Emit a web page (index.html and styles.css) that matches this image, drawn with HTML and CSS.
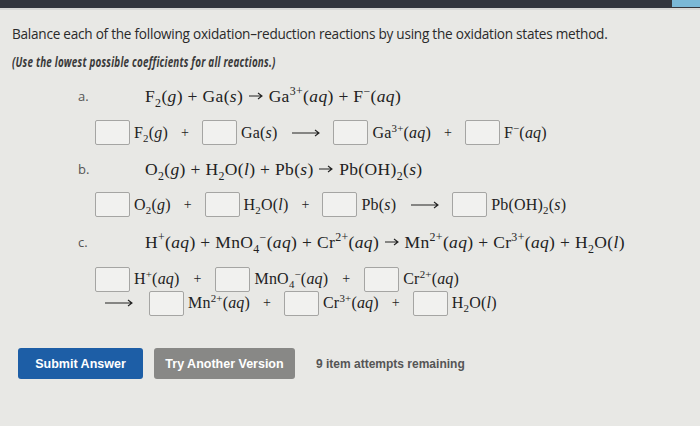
FILE: index.html
```html
<!DOCTYPE html>
<html>
<head>
<meta charset="utf-8">
<link rel="stylesheet" href="styles.css">
</head>
<body>
<div class="topbar"><span class="badge">Kno</span></div>
<div class="content">
  <p class="intro">Balance each of the following oxidation–reduction reactions by using the oxidation states method.</p>
  <p class="note"><span class="note-text">(Use the lowest possible coefficients for all reactions.)</span></p>

  <div class="problem pa">
    <div class="eq-line"><span class="label">a.</span><span class="math">F<sub>2</sub>(<i>g</i>) + Ga(<i>s</i>) <svg class="sarrow" viewBox="0 0 16 10"><path d="M1 5H14M10 2L14 5L10 8" /></svg> Ga<sup>3+</sup>(<i>aq</i>) + F<sup>−</sup>(<i>aq</i>)</span></div>
    <div class="ans-row">
      <span class="box"></span><span class="term">F<sub>2</sub>(<i>g</i>)</span><span class="op">+</span>
      <span class="box"></span><span class="term">Ga(<i>s</i>)</span><svg class="larrow" viewBox="0 0 30 10"><path d="M1 5H28M24 2L28 5L24 8" /></svg>
      <span class="box"></span><span class="term">Ga<sup>3+</sup>(<i>aq</i>)</span><span class="op">+</span>
      <span class="box"></span><span class="term">F<sup>−</sup>(<i>aq</i>)</span>
    </div>
  </div>

  <div class="problem pb">
    <div class="eq-line"><span class="label">b.</span><span class="math">O<sub>2</sub>(<i>g</i>) + H<sub>2</sub>O(<i>l</i>) + Pb(<i>s</i>) <svg class="sarrow" viewBox="0 0 16 10"><path d="M1 5H14M10 2L14 5L10 8" /></svg> Pb(OH)<sub>2</sub>(<i>s</i>)</span></div>
    <div class="ans-row">
      <span class="box"></span><span class="term">O<sub>2</sub>(<i>g</i>)</span><span class="op">+</span>
      <span class="box"></span><span class="term">H<sub>2</sub>O(<i>l</i>)</span><span class="op">+</span>
      <span class="box"></span><span class="term">Pb(<i>s</i>)</span><svg class="larrow" viewBox="0 0 30 10"><path d="M1 5H28M24 2L28 5L24 8" /></svg>
      <span class="box"></span><span class="term">Pb(OH)<sub>2</sub>(<i>s</i>)</span>
    </div>
  </div>

  <div class="problem pc">
    <div class="eq-line"><span class="label">c.</span><span class="math">H<sup>+</sup>(<i>aq</i>) + MnO<sub>4</sub><sup>−</sup>(<i>aq</i>) + Cr<sup>2+</sup>(<i>aq</i>) <svg class="sarrow" viewBox="0 0 16 10"><path d="M1 5H14M10 2L14 5L10 8" /></svg> Mn<sup>2+</sup>(<i>aq</i>) + Cr<sup>3+</sup>(<i>aq</i>) + H<sub>2</sub>O(<i>l</i>)</span></div>
    <div class="ans-row tight">
      <span class="box"></span><span class="term">H<sup>+</sup>(<i>aq</i>)</span><span class="op">+</span>
      <span class="box"></span><span class="term">MnO<sub>4</sub><sup>−</sup>(<i>aq</i>)</span><span class="op">+</span>
      <span class="box"></span><span class="term">Cr<sup>2+</sup>(<i>aq</i>)</span>
    </div>
    <div class="ans-row tight second">
      <svg class="larrow lead" viewBox="0 0 30 10"><path d="M1 5H28M24 2L28 5L24 8" /></svg>
      <span class="box"></span><span class="term">Mn<sup>2+</sup>(<i>aq</i>)</span><span class="op">+</span>
      <span class="box"></span><span class="term">Cr<sup>3+</sup>(<i>aq</i>)</span><span class="op">+</span>
      <span class="box"></span><span class="term">H<sub>2</sub>O(<i>l</i>)</span>
    </div>
  </div>

  <div class="actions">
    <button class="btn primary">Submit Answer</button>
    <button class="btn secondary">Try Another Version</button>
    <span class="attempts">9 item attempts remaining</span>
  </div>
</div>
</body>
</html>
```
FILE: styles.css
```css
html, body {
  margin: 0;
  padding: 0;
}
body {
  width: 700px;
  height: 426px;
  overflow: hidden;
  background: #e8e8e5;
  font-family: "Open Sans", "Liberation Sans", sans-serif;
  color: #2a2a2a;
}
.topbar {
  height: 8px;
  background: #34373e;
  display: flex;
  justify-content: flex-end;
  border-bottom: 2px solid #d9d9d6;
}
.badge {
  width: 28px;
  height: 7px;
  background: #7ab8d6;
  color: #7ab8d6;
  font-size: 6px;
  line-height: 7px;
  overflow: hidden;
}
.content {
  padding-left: 12px;
}
.intro {
  margin: 15px 0 0 0;
  font-size: 13.6px;
  line-height: 18px;
  letter-spacing: -0.25px;
}
.note {
  margin: 10px 0 0 0;
  font-size: 14.5px;
  line-height: 18px;
  font-style: italic;
  font-weight: 700;
  color: #3a3a3a;
  white-space: nowrap;
}
.note-text {
  display: inline-block;
  transform: scaleX(0.68);
  transform-origin: left center;
  letter-spacing: 0.3px;
}
.problem {
  display: flex;
  flex-direction: column;
}
.eq-line {
  display: flex;
  align-items: center;
  height: 22px;
}
.label {
  width: 67px;
  padding-left: 66px;
  font-size: 13px;
  color: #555;
}
.math, .term, .op {
  font-family: "Liberation Serif", "DejaVu Serif", serif;
  color: #222;
}
.math {
  font-size: 17.5px;
  letter-spacing: 0.35px;
  white-space: nowrap;
}
sub, sup {
  font-size: 68%;
  line-height: 0;
}
.sarrow {
  width: 16px;
  height: 10px;
  vertical-align: 1px;
}
.sarrow path, .larrow path {
  fill: none;
  stroke: #222;
  stroke-width: 1.1;
}
.larrow {
  width: 30px;
  height: 10px;
  margin: 0 12px 0 14px;
  flex-shrink: 0;
}
.larrow.lead {
  margin: 0 15px 0 9px;
}
.ans-row {
  display: flex;
  align-items: center;
  height: 25px;
  padding-left: 83px;
  margin-top: 12px;
  white-space: nowrap;
}
.pa { margin-top: 14px; }
.pa .ans-row { margin-top: 13px; }
.pb { margin-top: 13px; }
.pc { margin-top: 14px; }
.pc .tight { margin-top: 14px; height: 24px; }
.pc .tight.second { margin-top: 0; }
.pc .tight:first-child + .tight { margin-top: 0; }
.pc .tight .op { margin: 0 14px; }
.pc .tight.second .op { margin: 0 13px; }
.box {
  width: 33px;
  height: 23px;
  background: #f1f1ef;
  border: 1px solid #a5a5a3;
  border-radius: 2px;
  flex-shrink: 0;
}
.term {
  font-size: 16px;
  letter-spacing: 0.2px;
  margin-left: 4px;
}
.op {
  font-size: 14px;
  margin: 0 13px;
}
.actions {
  display: flex;
  align-items: center;
  margin-top: 33px;
  padding-left: 6px;
  gap: 11px;
}
.btn {
  font-family: "Liberation Sans", Arial, sans-serif;
  font-weight: 700;
  font-size: 12.5px;
  color: #fff;
  border: none;
  border-radius: 3px;
  height: 31px;
}
.primary {
  background: #1d5ea6;
  width: 125px;
}
.secondary {
  background: #888886;
  width: 141px;
}
.attempts {
  margin-left: 10px;
  font-family: "Liberation Sans", Arial, sans-serif;
  font-weight: 700;
  font-size: 12px;
  color: #555;
}
```
